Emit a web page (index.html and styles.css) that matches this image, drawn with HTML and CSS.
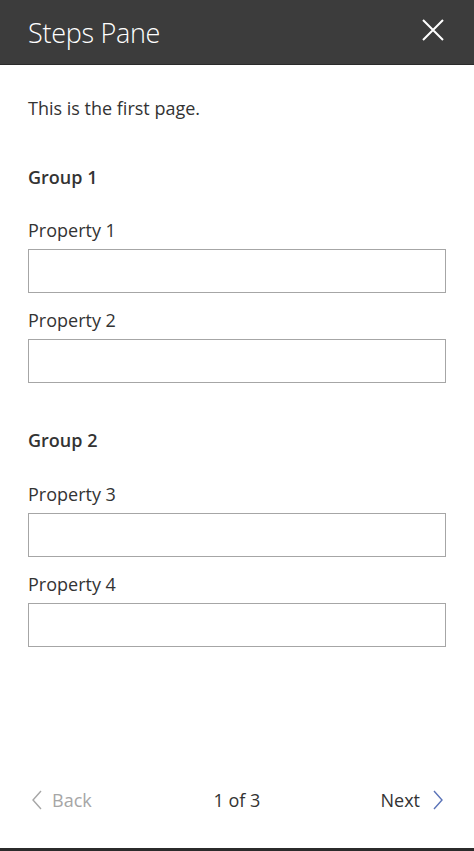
FILE: index.html
```html
<!DOCTYPE html>
<html lang="en">
<head>
<meta charset="utf-8">
<title>Steps Pane</title>
<link rel="stylesheet" href="styles.css">
</head>
<body>
<div class="pane">
  <header class="pane-header">
    <h1 class="pane-title">Steps Pane</h1>
    <button class="close-btn" aria-label="Close">
      <svg width="22" height="22" viewBox="0 0 22 22"><path d="M1 1 L21 21 M21 1 L1 21" stroke="#ffffff" stroke-width="2" fill="none"/></svg>
    </button>
  </header>
  <main class="pane-body">
    <p class="intro">This is the first page.</p>
    <section class="group">
      <h2 class="group-title">Group 1</h2>
      <div class="field">
        <label class="field-label">Property 1</label>
        <input class="field-input" type="text">
      </div>
      <div class="field">
        <label class="field-label">Property 2</label>
        <input class="field-input" type="text">
      </div>
    </section>
    <section class="group">
      <h2 class="group-title">Group 2</h2>
      <div class="field">
        <label class="field-label">Property 3</label>
        <input class="field-input" type="text">
      </div>
      <div class="field">
        <label class="field-label">Property 4</label>
        <input class="field-input" type="text">
      </div>
    </section>
  </main>
  <footer class="pane-footer">
    <button class="nav-btn back">
      <svg width="12" height="20" viewBox="0 0 12 20"><path d="M10 1 L2 10 L10 19" stroke="#a6a6a6" stroke-width="1.4" fill="none"/></svg>
      <span>Back</span>
    </button>
    <span class="page-count">1 of 3</span>
    <button class="nav-btn next">
      <span>Next</span>
      <svg width="12" height="20" viewBox="0 0 12 20"><path d="M2 1 L10 10 L2 19" stroke="#5a73b8" stroke-width="1.4" fill="none"/></svg>
    </button>
  </footer>
</div>
</body>
</html>
```
FILE: styles.css
```css
html, body {
  margin: 0;
  padding: 0;
  height: 100%;
}
body {
  font-family: "Open Sans", "Noto Sans", sans-serif;
  color: #333333;
  background: #ffffff;
}
.pane {
  display: flex;
  flex-direction: column;
  height: 100vh;
  box-sizing: border-box;
  border-bottom: 3px solid #2b2b2b;
}
.pane-header {
  height: 65px;
  flex: none;
  background: #3c3c3c;
  border-bottom: 1px solid #2a2a2a;
  box-sizing: border-box;
  display: flex;
  align-items: center;
  justify-content: space-between;
  padding: 0 30px 0 28px;
}
.pane-title {
  margin: 0;
  font-size: 27px;
  font-weight: 300;
  color: #ffffff;
  letter-spacing: -0.3px;
}
.close-btn {
  background: none;
  border: none;
  padding: 0;
  width: 22px;
  height: 22px;
  display: flex;
  margin-top: -4px;
}
.pane-body {
  flex: 1;
  padding: 0 28px;
}
.intro {
  margin: 31px 0 0;
  font-size: 18px;
  line-height: 24px;
}
.group {
  margin-top: 45px;
}
.group-title {
  margin: 0 0 29px;
  font-size: 18px;
  font-weight: 600;
  line-height: 24px;
}
.group + .group .group-title {
  margin-bottom: 30px;
}
.field {
  display: flex;
  flex-direction: column;
  gap: 7px;
}
.field + .field {
  margin-top: 15px;
}
.field-label {
  font-size: 18px;
  line-height: 24px;
}
.field-input {
  height: 44px;
  box-sizing: border-box;
  border: 1px solid #a6a6a6;
  margin: 0;
  padding: 0 10px;
  font: inherit;
}
.pane-footer {
  flex: none;
  display: grid;
  grid-template-columns: 1fr auto 1fr;
  align-items: center;
  padding: 0 28px;
  height: 24px;
  margin-bottom: 36px;
}
.nav-btn {
  background: none;
  border: none;
  padding: 0;
  display: flex;
  align-items: center;
  gap: 9px;
  font-family: inherit;
  font-size: 18px;
  line-height: 24px;
}
.nav-btn.back {
  color: #a6a6a6;
  justify-self: start;
  margin-left: 3px;
}
.nav-btn.next {
  color: #333333;
  justify-self: end;
  margin-right: 2px;
  gap: 12px;
}
.page-count {
  font-size: 18px;
  line-height: 24px;
}
```
